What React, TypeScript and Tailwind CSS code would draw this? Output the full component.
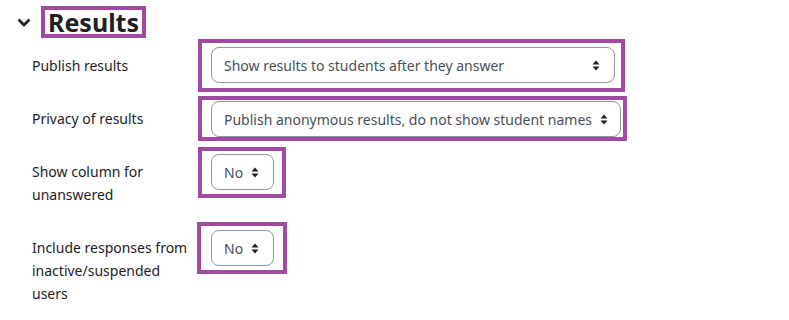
import React from 'react';

const font = { fontFamily: '"Noto Sans", "Open Sans", Arial, sans-serif' };

const SortArrows = () => (
    <svg width="8" height="11" viewBox="0 0 8 11" className="shrink-0">
        <path d="M4 0.5 L7.5 4.5 L0.5 4.5 Z" fill="#1d2125" />
        <path d="M4 10.5 L7.5 6.5 L0.5 6.5 Z" fill="#1d2125" />
    </svg>
);

const FakeSelect: React.FC<{ value: string; className?: string }> = ({ value, className }) => (
    <div
        className={`flex h-[36px] items-center justify-between gap-2 rounded-[8px] border border-[#8f959e] bg-white pl-[12px] pr-[14px] text-[14px] text-[#495057] ${className || ''}`}
    >
        <span className="whitespace-nowrap">{value}</span>
        <SortArrows />
    </div>
);

export default function App() {
    return (
        <div className="h-[320px] w-[789px] overflow-hidden bg-white text-[#1d2125]" style={font}>
            <div className="flex items-center pt-[6px]">
                <svg width="14" height="9" viewBox="0 0 14 9" className="ml-[17px] mr-[10px] shrink-0">
                    <polyline points="1.5,1.5 7,7 12.5,1.5" fill="none" stroke="#1d2125" strokeWidth="2.8" />
                </svg>
                <div className="border-4 border-[#a04aa2] px-[3px] leading-[24px]">
                    <h3 className="text-[25px] font-bold">Results</h3>
                </div>
            </div>

            <div className="mt-px flex items-center">
                <div className="w-[198px] shrink-0 pl-[32px] text-[14px]">Publish results</div>
                <div className="border-4 border-[#a04aa2] pb-[5px] pl-[9px] pr-[6px] pt-[4px]">
                    <FakeSelect value="Show results to students after they answer" className="w-[404px]" />
                </div>
            </div>

            <div className="mt-[4px] flex items-center">
                <div className="w-[198px] shrink-0 pl-[32px] text-[14px]">Privacy of results</div>
                <div className="border-4 border-[#a04aa2] pb-0 pl-[9px] pr-[2px] pt-px">
                    <FakeSelect value="Publish anonymous results, do not show student names" className="w-[410px]" />
                </div>
            </div>

            <div className="mt-[6px] flex items-start">
                <div className="w-[198px] shrink-0 pl-[32px] pt-[13px] text-[14px] leading-[23px]">
                    Show column for
                    <br />
                    unanswered
                </div>
                <div className="border-4 border-[#a04aa2] pb-[4px] pl-[9px] pr-[8px] pt-[3px]">
                    <FakeSelect value="No" className="w-[63px]" />
                </div>
            </div>

            <div className="mt-[16px] flex items-start">
                <div className="w-[198px] shrink-0 pl-[32px] pt-[14px] text-[14px] leading-[23px]">
                    Include responses from
                    <br />
                    inactive/suspended
                    <br />
                    users
                </div>
                <div className="-ml-px border-4 border-[#a04aa2] pb-[4px] pl-[10px] pr-[9px] pt-[4px]">
                    <FakeSelect value="No" className="w-[63px]" />
                </div>
            </div>
        </div>
    );
}
